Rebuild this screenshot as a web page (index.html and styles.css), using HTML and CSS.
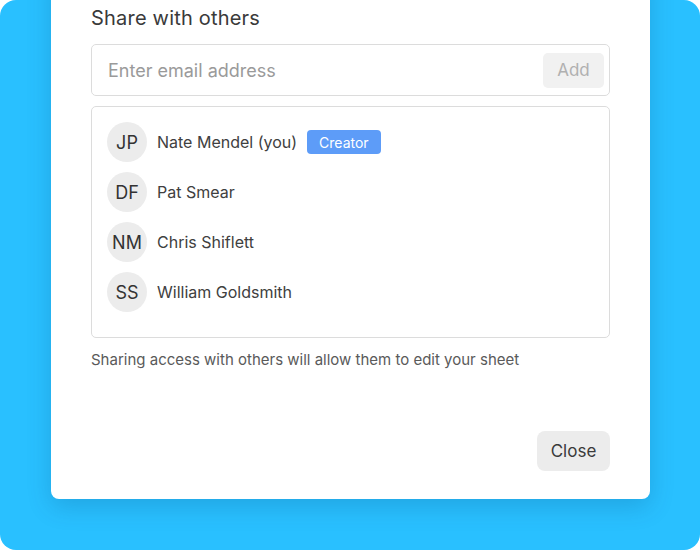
FILE: index.html
```html
<!DOCTYPE html>
<html>
<head>
<meta charset="utf-8">
<link rel="stylesheet" href="styles.css">
</head>
<body>
<div class="frame">
  <div class="modal">
    <h2 class="title">Share with others</h2>
    <div class="email-field">
      <span class="placeholder">Enter email address</span>
      <button class="add-btn">Add</button>
    </div>
    <div class="people">
      <div class="person">
        <div class="avatar">JP</div>
        <span class="name">Nate Mendel (you)</span>
        <span class="badge">Creator</span>
      </div>
      <div class="person">
        <div class="avatar">DF</div>
        <span class="name">Pat Smear</span>
      </div>
      <div class="person">
        <div class="avatar">NM</div>
        <span class="name">Chris Shiflett</span>
      </div>
      <div class="person">
        <div class="avatar">SS</div>
        <span class="name">William Goldsmith</span>
      </div>
    </div>
    <p class="hint">Sharing access with others will allow them to edit your sheet</p>
    <div class="footer">
      <button class="close-btn">Close</button>
    </div>
  </div>
</div>
</body>
</html>
```

FILE: styles.css
```css
* { box-sizing: border-box; }
html, body { margin: 0; padding: 0; background: #ffffff; }
body { font-family: Inter, "Noto Sans", sans-serif; }

.frame {
  width: 700px;
  height: 550px;
  background: #29c0ff;
  border-radius: 16px;
  overflow: hidden;
  display: flex;
  flex-direction: column;
  justify-content: flex-end;
  padding: 0 50px 51px 51px;
}

.modal {
  flex-shrink: 0;
  background: #ffffff;
  border-radius: 8px;
  box-shadow: 0 8px 24px rgba(0, 60, 110, 0.2);
  padding: 40px 40px 28px 40px;
  display: flex;
  flex-direction: column;
}

.title {
  margin: 0 0 14px 0;
  font-size: 20px;
  line-height: 24px;
  font-weight: 400;
  letter-spacing: 0.2px;
  color: #3a3a3a;
}

.email-field {
  height: 52px;
  border: 1px solid #dcdcdc;
  border-radius: 5px;
  display: flex;
  align-items: center;
  justify-content: space-between;
  padding: 0 5px 0 16px;
}

.placeholder {
  font-size: 18px;
  color: #9a9a9a;
}

.add-btn {
  width: 61px;
  height: 35px;
  border: none;
  border-radius: 5px;
  background: #f1f1f1;
  color: #b0b0b0;
  font-family: inherit;
  font-size: 17px;
  padding: 0;
}

.people {
  margin-top: 10px;
  border: 1px solid #dcdcdc;
  border-radius: 5px;
  padding: 15px 15px 25px 15px;
  display: flex;
  flex-direction: column;
  gap: 10px;
}

.person {
  display: flex;
  align-items: center;
  height: 40px;
}

.avatar {
  width: 40px;
  height: 40px;
  border-radius: 50%;
  background: #ececec;
  color: #333333;
  font-size: 18px;
  display: flex;
  align-items: center;
  justify-content: center;
  margin-right: 10px;
}

.name {
  font-size: 16px;
  color: #404040;
}

.badge {
  margin-left: 10px;
  height: 24px;
  padding: 0 12px;
  border-radius: 4px;
  background: #5d9cf8;
  color: #ffffff;
  font-size: 14px;
  display: flex;
  align-items: center;
}

.hint {
  margin: 13px 0 0 0;
  font-size: 15px;
  line-height: 18px;
  color: #5a5a5a;
}

.footer {
  margin-top: 62px;
  display: flex;
  justify-content: flex-end;
}

.close-btn {
  width: 73px;
  height: 40px;
  border: none;
  border-radius: 8px;
  background: #ececec;
  color: #3a3a3a;
  font-family: inherit;
  font-size: 17px;
  padding: 0;
}
```
